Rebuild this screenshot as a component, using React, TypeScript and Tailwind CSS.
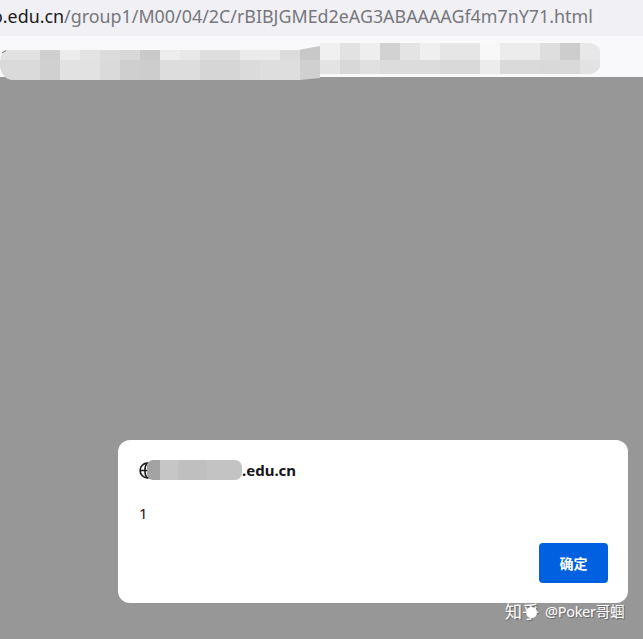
const topRow: [number, string][] = [
  [40, "#e2e2e2"], [20, "#cfcfcf"], [20, "#ececec"], [20, "#e3e3e3"], [20, "#dcdcdc"], [20, "#d8d8d8"],
  [20, "#c9c9c9"], [20, "#ededed"], [20, "#e8e8e8"], [40, "#dedede"], [40, "#ebebeb"], [20, "#dcdcdc"], [20, "#c8c8c8"],
];
const bottomRow: [number, string][] = [
  [40, "#dadada"], [20, "#d0d0d0"], [40, "#e2e2e2"], [20, "#dadada"], [20, "#cfcfcf"], [20, "#cdcdcd"],
  [40, "#dddddd"], [40, "#d6d6d6"], [20, "#dbdbdb"], [40, "#dedede"], [20, "#d0d0d0"],
];
const topRowRight: [number, string][] = [
  [20, "#f0f0f0"], [20, "#e2e2e2"], [20, "#eeeeee"], [20, "#d2d2d2"], [20, "#e4e4e4"], [20, "#efefef"],
  [40, "#e6e6e6"], [20, "#f8f8f8"], [40, "#ececec"], [20, "#dedede"], [20, "#cdcdcd"], [20, "#e8e8e8"],
];
const bottomRowRight: [number, string][] = [
  [20, "#e3e3e3"], [20, "#d8d8d8"], [20, "#e0e0e0"], [60, "#dcdcdc"], [40, "#d9d9d9"], [20, "#ececec"],
  [40, "#dadada"], [40, "#d9d9d9"], [20, "#e2e2e2"],
];

function Cells({ cells, x, y, h }: { cells: [number, string][]; x: number; y: number; h: number }) {
  let cx = x;
  return (
    <>
      {cells.map(([w, fill], i) => {
        const rect = <rect key={i} x={cx} y={y} width={w} height={h} fill={fill} />;
        cx += w;
        return rect;
      })}
    </>
  );
}

// blurred-out tab/bookmark strip
function BlurStrip() {
  return (
    <svg width="643" height="44" viewBox="0 36 643 44" className="relative z-10 block overflow-visible">
      <defs>
        <clipPath id="left">
          <path d="M8 50H298L320 46V78L300 80H14C4 80 0 72 0 64C0 56 2 50 8 50Z" />
        </clipPath>
        <clipPath id="right">
          <rect x="300" y="43" width="301" height="31" rx="12" />
        </clipPath>
      </defs>
      <g clipPath="url(#right)">
        <Cells cells={topRowRight} x={320} y={43} h={17} />
        <Cells cells={bottomRowRight} x={320} y={60} h={14} />
      </g>
      <g clipPath="url(#left)">
        <Cells cells={topRow} x={0} y={46} h={14} />
        <Cells cells={bottomRow} x={0} y={60} h={20} />
      </g>
      <path d="M2 53L6 50.5" stroke="#77777c" strokeWidth="1" />
    </svg>
  );
}

export default function App() {
  return (
    <div className="relative flex h-[639px] w-[643px] flex-col overflow-hidden bg-[#979798] font-['Noto_Sans','Noto_Sans_CJK_SC',sans-serif]">
      <div className="flex h-[36px] items-center overflow-hidden whitespace-nowrap bg-[#f0f0f5] pb-[4px] text-[17.87px] text-[#77777c]">
        <span className="ml-[-8px] text-[#1c1c20]">o.edu.cn</span>
        <span>/group1/M00/04/2C/rBIBJGMEd2eAG3ABAAAAGf4m7nY71.html</span>
      </div>
      <div className="h-[41px] bg-[#f9f9fb]">
        <BlurStrip />
      </div>

      <div className="ml-[118px] mt-[363px] flex h-[163px] w-[510px] flex-col rounded-[12px] bg-white pl-[21px] pr-[20px]">
        <div className="mt-[20px] flex h-[20px] items-center">
          <svg width="17" height="19" viewBox="0 0 16 18" fill="none" stroke="#1c1c20" strokeWidth="1.6" className="shrink-0">
            <circle cx="8" cy="9" r="7" />
            <path d="M1 9h14M8 2c-3.2 2-3.2 12 0 14" />
          </svg>
          <div className="relative ml-[-9px] h-[20px] w-[95px] rounded-l-[6px] rounded-r-[7px] bg-[linear-gradient(90deg,#a3a3a3_0,#a3a3a3_13px,#c6c6c6_13px,#c6c6c6_31px,#bfbfbf_31px,#bfbfbf_60px,#c3c3c3_60px)]" />
          <span className="pt-[1px] text-[15px] font-bold text-[#15141a]">.edu.cn</span>
        </div>
        <p className="mt-[23px] text-[15px] leading-[20px] text-[#15141a]">1</p>
        <div className="mt-[20px] flex justify-end">
          <button className="flex h-[40px] w-[69px] items-center justify-center rounded-[4px] bg-[#0061e0] text-[14px] font-bold text-white">
            确定
          </button>
        </div>
      </div>

      <div className="absolute left-[505px] top-[599px] flex items-center gap-[6px] whitespace-nowrap text-white [text-shadow:1px_1px_1px_rgba(0,0,0,0.35)]">
        <span className="text-[17px]">知乎</span>
        <span className="text-[14.5px] tracking-[-0.3px]">@Poker哥蝈</span>
      </div>
      <div className="absolute left-[526px] top-[607px] h-[11px] w-[11px] rounded-full bg-white" />
    </div>
  );
}
